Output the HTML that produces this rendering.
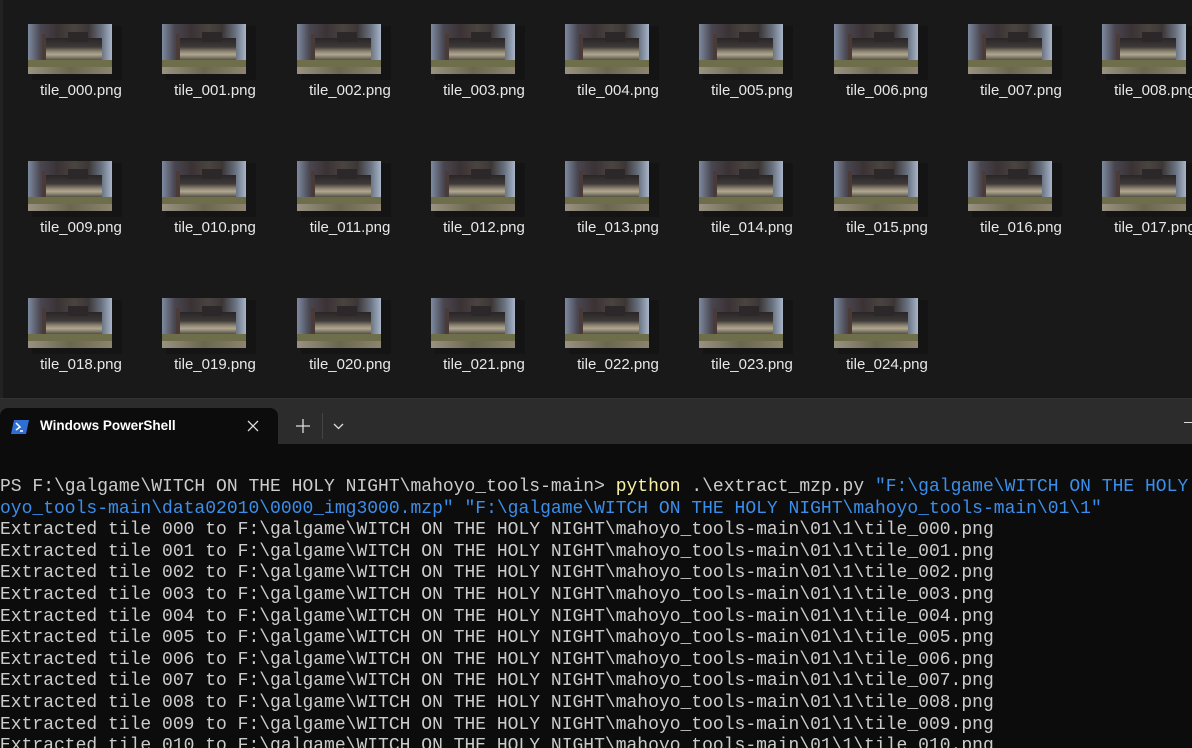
<!DOCTYPE html>
<html><head><meta charset="utf-8"><style>
*{margin:0;padding:0;box-sizing:border-box}
html,body{width:1192px;height:748px;overflow:hidden}
body{background:#0c0c0c;position:relative;font-family:"Liberation Sans",sans-serif}
#ex{position:absolute;left:0;top:0;width:1192px;height:398px;background:#191919;border-left:3px solid #222;overflow:hidden}
.t{position:absolute;width:106px}
.sh{position:absolute;left:4px;top:2px;width:90px;height:54px;background:#141414}
.th{position:absolute;left:0;top:0;width:84px;height:50px;overflow:hidden;background:
 linear-gradient(90deg,#7d8aa0 0,#4a4650 15%,#3a3234 35%,#4a4440 55%,#3c3636 72%,#6a7482 88%,#a8b4c8 100%);}
.th i{position:absolute;display:block}
.l{position:absolute;top:58px;left:0px;width:106px;text-align:center;color:#e8e8e8;font-size:15px;white-space:nowrap}
#tb{position:absolute;left:0;top:398px;width:1192px;height:46px;background:#2c2c2c;border-top:1px solid #333}
#tab{position:absolute;left:0;top:9px;width:278px;height:37px;background:#0c0c0c;border-radius:8px 8px 0 0}
#term{position:absolute;left:0;top:477px;width:1192px;height:272px;overflow:hidden;font-family:"Liberation Mono","DejaVu Sans Mono",monospace;font-size:18px;line-height:21.6px;color:#cccccc;white-space:pre}
.y{color:#f9f1a5}.b{color:#3b8eea}
</style></head><body>
<div id="ex">
</div>
<div id="tb">
 <div id="tab">
  <svg style="position:absolute;left:11px;top:12px" width="18" height="14" viewBox="0 0 18 14"><path d="M3 0H18L15 14H0Z" fill="#2f6fd3"/><path d="M5 3L9 7L5 10M9 11H12" stroke="#fff" stroke-width="1.5" fill="none"/></svg>
  <span style="position:absolute;left:40px;top:10px;color:#fff;font-size:13.5px;font-weight:bold">Windows PowerShell</span>
  <svg style="position:absolute;left:247px;top:12px" width="12" height="12"><path d="M1 1L11 11M11 1L1 11" stroke="#ddd" stroke-width="1.3"/></svg>
 </div>
 <svg style="position:absolute;left:296px;top:20px" width="14" height="14"><path d="M7 0V14M0 7H14" stroke="#ddd" stroke-width="1.3"/></svg>
 <div style="position:absolute;left:322px;top:14px;width:1px;height:26px;background:#444"></div>
 <svg style="position:absolute;left:333px;top:24px" width="11" height="7"><path d="M1 1L5.5 5.5L10 1" stroke="#ddd" stroke-width="1.3" fill="none"/></svg>
 <div style="position:absolute;left:1184px;top:23px;width:8px;height:1px;background:#ddd"></div>
</div>
<div id="term">PS F:\galgame\WITCH ON THE HOLY NIGHT\mahoyo_tools-main&gt; <span class="y">python</span> .\extract_mzp.py <span class="b">"F:\galgame\WITCH ON THE HOLY NIGHT\mah</span>
<span class="b">oyo_tools-main\data02010\0000_img3000.mzp" "F:\galgame\WITCH ON THE HOLY NIGHT\mahoyo_tools-main\01\1"</span>
Extracted tile 000 to F:\galgame\WITCH ON THE HOLY NIGHT\mahoyo_tools-main\01\1\tile_000.png
Extracted tile 001 to F:\galgame\WITCH ON THE HOLY NIGHT\mahoyo_tools-main\01\1\tile_001.png
Extracted tile 002 to F:\galgame\WITCH ON THE HOLY NIGHT\mahoyo_tools-main\01\1\tile_002.png
Extracted tile 003 to F:\galgame\WITCH ON THE HOLY NIGHT\mahoyo_tools-main\01\1\tile_003.png
Extracted tile 004 to F:\galgame\WITCH ON THE HOLY NIGHT\mahoyo_tools-main\01\1\tile_004.png
Extracted tile 005 to F:\galgame\WITCH ON THE HOLY NIGHT\mahoyo_tools-main\01\1\tile_005.png
Extracted tile 006 to F:\galgame\WITCH ON THE HOLY NIGHT\mahoyo_tools-main\01\1\tile_006.png
Extracted tile 007 to F:\galgame\WITCH ON THE HOLY NIGHT\mahoyo_tools-main\01\1\tile_007.png
Extracted tile 008 to F:\galgame\WITCH ON THE HOLY NIGHT\mahoyo_tools-main\01\1\tile_008.png
Extracted tile 009 to F:\galgame\WITCH ON THE HOLY NIGHT\mahoyo_tools-main\01\1\tile_009.png
Extracted tile 010 to F:\galgame\WITCH ON THE HOLY NIGHT\mahoyo_tools-main\01\1\tile_010.png</div>
<script>
var ex=document.getElementById('ex'),xs=[28,162,297,431,565,699,834,968,1102],ys=[24,161,298],n=0;
var inner='<i style="left:14px;top:10px;width:4px;height:26px;background:#4a3a38"></i>'+
'<i style="left:18px;top:14px;width:56px;height:22px;background:linear-gradient(180deg,#2a2628,#3e3a38 40%,#8a8070 60%,#b0a890 75%,#555048)"></i>'+
'<i style="left:40px;top:8px;width:20px;height:10px;background:#2c282a"></i>'+
'<i style="left:0;top:36px;width:84px;height:7px;background:#6f6e4a"></i>'+
'<i style="left:0;top:43px;width:84px;height:7px;background:linear-gradient(90deg,#9a9282,#6a6650,#8c8470)"></i>';
for(var r=0;r<3;r++)for(var c=0;c<9;c++){if(n>24)break;var d=document.createElement('div');d.className='t';d.style.left=(xs[c]-3)+'px';d.style.top=ys[r]+'px';
d.innerHTML='<div class="sh"></div><div class="th">'+inner+'</div><div class="l">tile_'+String(n).padStart(3,'0')+'.png</div>';ex.appendChild(d);n++;}
</script>
</body></html>
